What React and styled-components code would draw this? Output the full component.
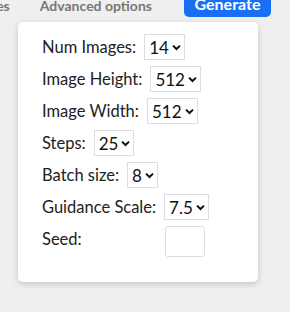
import styled, { createGlobalStyle } from "styled-components";

const Global = createGlobalStyle`
  html, body {
    margin: 0;
    padding: 0;
    background: #efefef;
    font-family: Lato, "Open Sans", sans-serif;
    overflow: hidden;
  }
`;

const Page = styled.div`
  width: 290px;
  height: 312px;
  overflow: hidden;
`;

const TopBar = styled.div`
  display: flex;
  align-items: flex-end;
  height: 17px;
  margin-left: -34px;
`;

const Tab = styled.div`
  font-size: 14px;
  font-weight: 700;
  color: #777;
  margin-right: ${(p) => p.gap || 0}px;
  line-height: 17px;
  transform: translateY(-3px);
  white-space: nowrap;
`;

const GenerateButton = styled.button`
  margin-left: auto;
  margin-right: 19px;
  width: 87px;
  height: 32px;
  border: none;
  border-radius: 5px;
  background: #176ff3;
  color: #fff;
  font-family: inherit;
  font-size: 16px;
  font-weight: 700;
  padding: 0 0 4px;
  display: flex;
  align-items: flex-end;
  justify-content: center;
`;

const Panel = styled.div`
  margin: 5px 0 0 18px;
  width: 240px;
  height: 260px;
  box-sizing: border-box;
  background: #fff;
  border-radius: 5px;
  box-shadow: 0 2px 6px rgba(0, 0, 0, 0.18);
  padding: 12px 0 0 24px;
  display: flex;
  flex-direction: column;
  gap: 6px;
`;

const Row = styled.div`
  display: flex;
  align-items: center;
  height: 26px;
  font-size: 16.5px;
  color: #222;
`;

const Label = styled.span`
  margin-right: ${(p) => p.gap || 8}px;
`;

const Select = styled.div`
  display: inline-flex;
  align-items: center;
  height: 26px;
  box-sizing: border-box;
  border: 1px solid #ddd;
  padding: 0 3px 0 4px;
  font-size: 17px;
  color: #111;
  gap: 3px;
`;

const SeedInput = styled.div`
  width: 40px;
  height: 31px;
  box-sizing: border-box;
  border: 1px solid #ddd;
  border-radius: 3px;
  margin-top: 5px;
`;

function Chevron() {
  return (
    <svg width="9" height="7" viewBox="0 0 9 7">
      <path d="M1 1.6 L4.5 5 L8 1.6" fill="none" stroke="#111" strokeWidth="2" />
    </svg>
  );
}

function Dropdown({ value }) {
  return (
    <Select>
      {value}
      <Chevron />
    </Select>
  );
}

const rows = [
  ["Num Images:", "14"],
  ["Image Height:", "512"],
  ["Image Width:", "512"],
  ["Steps:", "25"],
  ["Batch size:", "8"],
  ["Guidance Scale:", "7.5"],
];

export default function App() {
  return (
    <Page>
      <Global />
      <TopBar>
        <Tab gap={30}>Images</Tab>
        <Tab>Advanced options</Tab>
        <GenerateButton>Generate</GenerateButton>
      </TopBar>
      <Panel>
        {rows.map(([label, value]) => (
          <Row key={label}>
            <Label>{label}</Label>
            <Dropdown value={value} />
          </Row>
        ))}
        <Row>
          <Label gap={83}>Seed:</Label>
          <SeedInput />
        </Row>
      </Panel>
    </Page>
  );
}
